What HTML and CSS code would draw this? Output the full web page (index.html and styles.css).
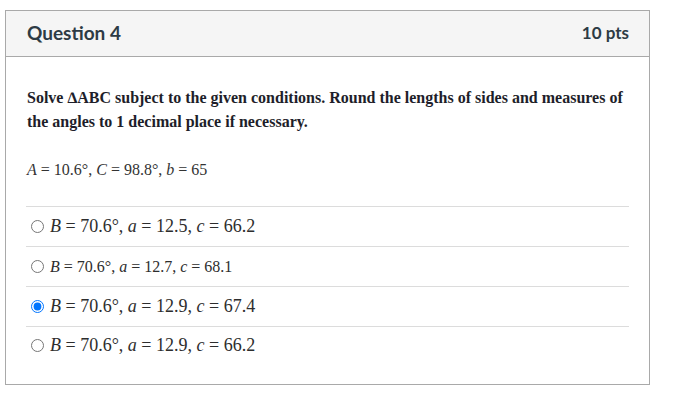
FILE: index.html
```html
<!DOCTYPE html>
<html>
<head>
<meta charset="utf-8">
<link rel="stylesheet" href="styles.css">
</head>
<body>
<div class="card">
  <div class="header">
    <span class="title">Question 4</span>
    <span class="pts">10 pts</span>
  </div>
  <div class="body">
    <p class="question">Solve ∆ABC subject to the given conditions. Round the lengths of sides and measures of the angles to 1 decimal place if necessary.</p>
    <p class="given"><i>A</i> = 10.6°, <i>C</i> = 98.8°, <i>b</i> = 65</p>
    <div class="answers">
      <label class="answer"><input type="radio" name="q4"><span class="m"><i>B</i> = 70.6°, <i>a</i> = 12.5, <i>c</i> = 66.2</span></label>
      <label class="answer"><input type="radio" name="q4"><span class="m small"><i>B</i> = 70.6°, <i>a</i> = 12.7, <i>c</i> = 68.1</span></label>
      <label class="answer"><input type="radio" name="q4" checked><span class="m"><i>B</i> = 70.6°, <i>a</i> = 12.9, <i>c</i> = 67.4</span></label>
      <label class="answer"><input type="radio" name="q4"><span class="m"><i>B</i> = 70.6°, <i>a</i> = 12.9, <i>c</i> = 66.2</span></label>
    </div>
  </div>
</div>
</body>
</html>
```
FILE: styles.css
```css
html, body {
  margin: 0;
  padding: 0;
  background: #fff;
}
body {
  padding: 10px 0 0 5px;
}
.card {
  width: 643px;
  border: 1px solid #a9a9a9;
  box-sizing: content-box;
}
.header {
  padding: 0 20px 3px 21px;
  box-sizing: border-box;
  height: 46px;
  background: #f5f5f5;
  border-bottom: 1px solid #a9a9a9;
  display: flex;
  align-items: center;
  justify-content: space-between;
  font-family: Lato, "Open Sans", sans-serif;
  color: #2d3b45;
}
.title {
  font-size: 19px;
  font-weight: 700;
}
.pts {
  font-size: 17px;
  font-weight: 700;
}
.body {
  padding: 29px 20px 19px 20px;
}
.question {
  margin: 0;
  font-family: "Liberation Serif", "Times New Roman", serif;
  font-weight: 700;
  font-size: 16px;
  line-height: 24px;
  color: #1e1e2a;
  padding-left: 1px;
}
.given {
  margin: 24px 0 0 0;
  font-family: "Liberation Serif", "Times New Roman", serif;
  font-size: 16px;
  line-height: 24px;
  color: #333;
  padding-left: 1px;
}
.answers {
  margin-top: 24px;
}
.answer {
  display: flex;
  align-items: center;
  height: 39px;
  border-top: 1px solid #dcdcdc;
  font-family: "Liberation Serif", "Times New Roman", serif;
  font-size: 18px;
  color: #2d2d2d;
}
.answer:nth-child(3), .answer:nth-child(4) {
  height: 38.5px;
}
.answer input {
  margin: 0 6px 0 5px;
  width: 13px;
  height: 13px;
}
.m.small {
  font-size: 16px;
}
```
